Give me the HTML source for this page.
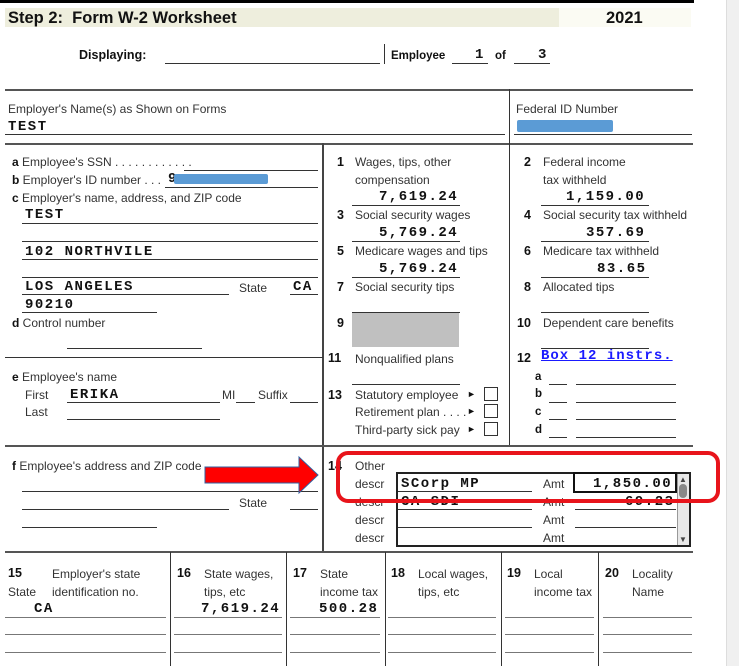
<!DOCTYPE html>
<html><head><meta charset="utf-8"><style>
*{margin:0;padding:0;box-sizing:border-box}
body{width:739px;height:666px;position:relative;background:#fff;overflow:hidden;font-family:"Liberation Sans",Arial,sans-serif;color:#333;font-size:12px}
div,span{position:absolute}
.t{white-space:nowrap;line-height:14px}
.n{font-weight:bold;color:#111;font-size:12.5px}
.v{font-family:"Liberation Mono","Courier New",monospace;font-weight:bold;color:#111;font-size:14px;letter-spacing:1.5px}
.h{height:1px;background:#333}
.hl{height:2px;background:#555}
.vl{width:1px;background:#333}
.g{height:1px;background:#777}
</style></head><body>
<div style="left:726px;top:0;width:13px;height:666px;background:#f0f0f0;border-left:1px solid #ddd"></div>
<div style="left:0;top:0;width:694px;height:3px;background:#000"></div>
<div style="left:5px;top:8px;width:554px;height:19px;background:#eeeedd"></div>
<div style="left:559px;top:8px;width:132px;height:19px;background:#fbfbf3"></div>
<div class="t" style="left:8px;top:9px;font-size:16.5px;font-weight:bold;color:#111;line-height:18px">Step 2:&nbsp;&nbsp;Form W-2 Worksheet</div>
<div class="t" style="left:606px;top:9px;font-size:16.5px;font-weight:bold;color:#111;line-height:18px">2021</div>
<div class="t" style="left:79px;top:48px;font-weight:bold;color:#111;font-size:12.5px">Displaying:</div>
<div class="h" style="left:165px;top:63px;width:215px"></div>
<div class="vl" style="left:384px;top:44px;height:20px"></div>
<div class="t" style="left:391px;top:49px;font-weight:bold;color:#111;font-size:11.5px">Employee</div>
<div class="h" style="left:452px;top:63px;width:36px"></div>
<div class="t v" style="left:475px;top:48px">1</div>
<div class="t" style="left:495px;top:49px;font-weight:bold;color:#111;font-size:11.5px">of</div>
<div class="h" style="left:514px;top:63px;width:36px"></div>
<div class="t v" style="left:538px;top:48px">3</div>

<div class="hl" style="left:5px;top:89px;width:688px"></div>
<div class="vl" style="left:509px;top:89px;height:55px"></div>
<div class="t" style="left:8px;top:102px">Employer's Name(s) as Shown on Forms</div>
<div class="t v" style="left:8px;top:120px">TEST</div>
<div class="h" style="left:5px;top:134px;width:500px"></div>
<div class="t" style="left:516px;top:102px">Federal ID Number</div>
<div style="left:517px;top:120px;width:96px;height:12px;background:#5b9bd5;border-radius:2px"></div>
<div class="h" style="left:514px;top:134px;width:178px"></div>
<div class="hl" style="left:5px;top:143px;width:688px"></div>
<div class="vl" style="left:322px;top:143px;height:409px;width:2px;background:#444"></div>
<div class="vl" style="left:509px;top:143px;height:303px"></div>

<div class="t" style="left:12px;top:155px"><b style="color:#111">a</b> Employee's SSN . . . . . . . . . . . .</div>
<div class="h" style="left:184px;top:170px;width:134px"></div>
<div class="t" style="left:12px;top:173px"><b style="color:#111">b</b> Employer's ID number . . .</div>
<div class="t v" style="left:168px;top:172px">9</div>
<div style="left:174px;top:174px;width:94px;height:10px;background:#5b9bd5;border-radius:2px"></div>
<div class="h" style="left:165px;top:187px;width:153px"></div>
<div class="t" style="left:12px;top:191px"><b style="color:#111">c</b> Employer's name, address, and ZIP code</div>
<div class="t v" style="left:25px;top:208px">TEST</div>
<div class="h" style="left:22px;top:223px;width:296px"></div>
<div class="h" style="left:22px;top:241px;width:296px"></div>
<div class="t v" style="left:25px;top:245px">102 NORTHVILE</div>
<div class="h" style="left:22px;top:259px;width:296px"></div>
<div class="h" style="left:22px;top:277px;width:296px"></div>
<div class="t v" style="left:25px;top:280px">LOS ANGELES</div>
<div class="h" style="left:22px;top:294px;width:207px"></div>
<div class="t" style="left:239px;top:281px">State</div>
<div class="t v" style="left:293px;top:280px">CA</div>
<div class="h" style="left:290px;top:294px;width:28px"></div>
<div class="t v" style="left:25px;top:298px">90210</div>
<div class="h" style="left:22px;top:312px;width:135px"></div>
<div class="t" style="left:12px;top:316px"><b style="color:#111">d</b> Control number</div>
<div class="h" style="left:67px;top:348px;width:135px"></div>
<div class="h" style="left:5px;top:357px;width:318px"></div>
<div class="t" style="left:12px;top:370px"><b style="color:#111">e</b> Employee's name</div>
<div class="t" style="left:25px;top:388px">First</div>
<div class="t v" style="left:70px;top:388px">ERIKA</div>
<div class="h" style="left:67px;top:402px;width:153px"></div>
<div class="t" style="left:222px;top:388px">MI</div>
<div class="h" style="left:236px;top:402px;width:19px"></div>
<div class="t" style="left:258px;top:388px">Suffix</div>
<div class="h" style="left:290px;top:402px;width:28px"></div>
<div class="t" style="left:25px;top:405px">Last</div>
<div class="h" style="left:67px;top:419px;width:153px"></div>

<div class="t n" style="left:337px;top:155px">1</div>
<div class="t" style="left:355px;top:155px">Wages, tips, other</div>
<div class="t" style="left:355px;top:173px">compensation</div>
<div class="t v" style="left:379px;top:190px">7,619.24</div>
<div class="h" style="left:352px;top:205px;width:108px"></div>
<div class="t n" style="left:337px;top:208px">3</div>
<div class="t" style="left:355px;top:208px">Social security wages</div>
<div class="t v" style="left:379px;top:226px">5,769.24</div>
<div class="h" style="left:352px;top:241px;width:108px"></div>
<div class="t n" style="left:337px;top:244px">5</div>
<div class="t" style="left:355px;top:244px">Medicare wages and tips</div>
<div class="t v" style="left:379px;top:262px">5,769.24</div>
<div class="h" style="left:352px;top:277px;width:108px"></div>
<div class="t n" style="left:337px;top:280px">7</div>
<div class="t" style="left:355px;top:280px">Social security tips</div>
<div class="h" style="left:352px;top:312px;width:108px"></div>
<div style="left:352px;top:313px;width:107px;height:34px;background:#c0c0c0"></div>
<div class="t n" style="left:337px;top:316px">9</div>
<div class="t n" style="left:328px;top:351px">11</div>
<div class="t" style="left:355px;top:352px">Nonqualified plans</div>
<div class="h" style="left:352px;top:384px;width:108px"></div>
<div class="t n" style="left:328px;top:388px">13</div>
<div class="t" style="left:355px;top:388px">Statutory employee</div>
<div class="t" style="left:355px;top:405px">Retirement plan . . . .</div>
<div class="t" style="left:355px;top:423px">Third-party sick pay</div>
<div class="t" style="left:467px;top:387px;font-size:9px;color:#111">►</div>
<div class="t" style="left:467px;top:404px;font-size:9px;color:#111">►</div>
<div class="t" style="left:467px;top:422px;font-size:9px;color:#111">►</div>
<div style="left:484px;top:387px;width:14px;height:14px;border:1px solid #333"></div>
<div style="left:484px;top:404px;width:14px;height:14px;border:1px solid #333"></div>
<div style="left:484px;top:422px;width:14px;height:14px;border:1px solid #333"></div>

<div class="t n" style="left:524px;top:155px">2</div>
<div class="t" style="left:543px;top:155px">Federal income</div>
<div class="t" style="left:543px;top:173px">tax withheld</div>
<div class="t v" style="left:566px;top:190px">1,159.00</div>
<div class="h" style="left:541px;top:205px;width:108px"></div>
<div class="t n" style="left:524px;top:208px">4</div>
<div class="t" style="left:543px;top:208px">Social security tax withheld</div>
<div class="t v" style="left:586px;top:226px">357.69</div>
<div class="h" style="left:541px;top:241px;width:108px"></div>
<div class="t n" style="left:524px;top:244px">6</div>
<div class="t" style="left:543px;top:244px">Medicare tax withheld</div>
<div class="t v" style="left:597px;top:262px">83.65</div>
<div class="h" style="left:541px;top:277px;width:108px"></div>
<div class="t n" style="left:524px;top:280px">8</div>
<div class="t" style="left:543px;top:280px">Allocated tips</div>
<div class="h" style="left:541px;top:312px;width:108px"></div>
<div class="t n" style="left:517px;top:316px">10</div>
<div class="t" style="left:543px;top:316px">Dependent care benefits</div>
<div class="h" style="left:541px;top:348px;width:108px"></div>
<div class="t n" style="left:517px;top:351px">12</div>
<div class="t v" style="left:541px;top:349px;color:#1a1aff;text-decoration:underline;letter-spacing:1px">Box 12 instrs.</div>
<div class="t n" style="left:535px;top:370px;font-size:11.5px">a</div>
<div class="t n" style="left:535px;top:387px;font-size:11.5px">b</div>
<div class="t n" style="left:535px;top:405px;font-size:11.5px">c</div>
<div class="t n" style="left:535px;top:423px;font-size:11.5px">d</div>
<div class="h" style="left:549px;top:384px;width:18px"></div><div class="h" style="left:576px;top:384px;width:100px"></div>
<div class="h" style="left:549px;top:402px;width:18px"></div><div class="h" style="left:576px;top:402px;width:100px"></div>
<div class="h" style="left:549px;top:419px;width:18px"></div><div class="h" style="left:576px;top:419px;width:100px"></div>
<div class="h" style="left:549px;top:437px;width:18px"></div><div class="h" style="left:576px;top:437px;width:100px"></div>

<div class="hl" style="left:5px;top:445px;width:688px"></div>

<div class="t" style="left:12px;top:459px"><b style="color:#111">f</b> Employee's address and ZIP code</div>
<div class="h" style="left:22px;top:491px;width:296px"></div>
<div class="h" style="left:22px;top:509px;width:207px"></div>
<div class="t" style="left:239px;top:496px">State</div>
<div class="h" style="left:290px;top:509px;width:28px"></div>
<div class="h" style="left:22px;top:527px;width:135px"></div>

<div class="t n" style="left:328px;top:459px">14</div>
<div class="t" style="left:355px;top:459px">Other</div>
<div class="t" style="left:355px;top:477px">descr</div>
<div class="t" style="left:355px;top:495px">descr</div>
<div class="t" style="left:355px;top:513px">descr</div>
<div class="t" style="left:355px;top:531px">descr</div>
<div style="left:396px;top:472px;width:295px;height:75px;border:2px solid #222"></div>
<div style="left:677px;top:474px;width:12px;height:71px;background:#e8e8e8;border-left:1px solid #999"></div>
<div class="t" style="left:679px;top:473px;font-size:8px;color:#444">▲</div>
<div style="left:679px;top:484px;width:8px;height:14px;background:#888;border-radius:4px"></div>
<div class="t" style="left:679px;top:533px;font-size:8px;color:#444">▼</div>
<div class="t v" style="left:401px;top:477px">SCorp MP</div>
<div class="t v" style="left:401px;top:495px">CA SDI</div>
<div class="t" style="left:543px;top:477px">Amt</div>
<div class="t" style="left:543px;top:495px">Amt</div>
<div class="t" style="left:543px;top:513px">Amt</div>
<div class="t" style="left:543px;top:531px">Amt</div>
<div class="h" style="left:398px;top:491px;width:134px"></div>
<div class="h" style="left:398px;top:509px;width:134px"></div>
<div class="h" style="left:398px;top:527px;width:134px"></div>
<div class="h" style="left:575px;top:509px;width:101px"></div>
<div class="h" style="left:575px;top:527px;width:101px"></div>
<div style="left:573px;top:472px;width:104px;height:21px;border:2px solid #111"></div>
<div class="t v" style="left:593px;top:477px">1,850.00</div>
<div class="t v" style="left:625px;top:495px">69.23</div>
<div style="left:336px;top:451px;width:384px;height:52px;border:4px solid #e8141b;border-radius:12px"></div>
<svg style="position:absolute;left:204px;top:455px" width="118" height="40"><polygon points="1,12 95,12 95,2 114,20 95,38 95,28 1,28" fill="#f00" stroke="#3060a0" stroke-width="1"/></svg>

<div class="hl" style="left:5px;top:551px;width:688px"></div>
<div class="vl" style="left:170px;top:552px;height:114px"></div>
<div class="vl" style="left:286px;top:552px;height:114px"></div>
<div class="vl" style="left:385px;top:552px;height:114px"></div>
<div class="vl" style="left:501px;top:552px;height:114px"></div>
<div class="vl" style="left:598px;top:552px;height:114px"></div>
<div class="t n" style="left:8px;top:566px">15</div>
<div class="t" style="left:52px;top:567px">Employer's state</div>
<div class="t" style="left:8px;top:585px">State</div>
<div class="t" style="left:52px;top:585px">identification no.</div>
<div class="t v" style="left:34px;top:602px">CA</div>
<div class="t n" style="left:177px;top:566px">16</div>
<div class="t" style="left:204px;top:567px">State wages,</div>
<div class="t" style="left:204px;top:585px">tips, etc</div>
<div class="t v" style="left:201px;top:602px">7,619.24</div>
<div class="t n" style="left:293px;top:566px">17</div>
<div class="t" style="left:320px;top:567px">State</div>
<div class="t" style="left:320px;top:585px">income tax</div>
<div class="t v" style="left:319px;top:602px">500.28</div>
<div class="t n" style="left:391px;top:566px">18</div>
<div class="t" style="left:418px;top:567px">Local wages,</div>
<div class="t" style="left:418px;top:585px">tips, etc</div>
<div class="t n" style="left:507px;top:566px">19</div>
<div class="t" style="left:534px;top:567px">Local</div>
<div class="t" style="left:534px;top:585px">income tax</div>
<div class="t n" style="left:605px;top:566px">20</div>
<div class="t" style="left:632px;top:567px">Locality</div>
<div class="t" style="left:632px;top:585px">Name</div>
<div class="g" style="left:5px;top:617px;width:161px"></div><div class="g" style="left:5px;top:634px;width:161px"></div><div class="g" style="left:5px;top:652px;width:161px"></div>
<div class="g" style="left:174px;top:617px;width:108px"></div><div class="g" style="left:174px;top:634px;width:108px"></div><div class="g" style="left:174px;top:652px;width:108px"></div>
<div class="g" style="left:290px;top:617px;width:90px"></div><div class="g" style="left:290px;top:634px;width:90px"></div><div class="g" style="left:290px;top:652px;width:90px"></div>
<div class="g" style="left:388px;top:617px;width:108px"></div><div class="g" style="left:388px;top:634px;width:108px"></div><div class="g" style="left:388px;top:652px;width:108px"></div>
<div class="g" style="left:505px;top:617px;width:89px"></div><div class="g" style="left:505px;top:634px;width:89px"></div><div class="g" style="left:505px;top:652px;width:89px"></div>
<div class="g" style="left:603px;top:617px;width:89px"></div><div class="g" style="left:603px;top:634px;width:89px"></div><div class="g" style="left:603px;top:652px;width:89px"></div>
</body></html>
